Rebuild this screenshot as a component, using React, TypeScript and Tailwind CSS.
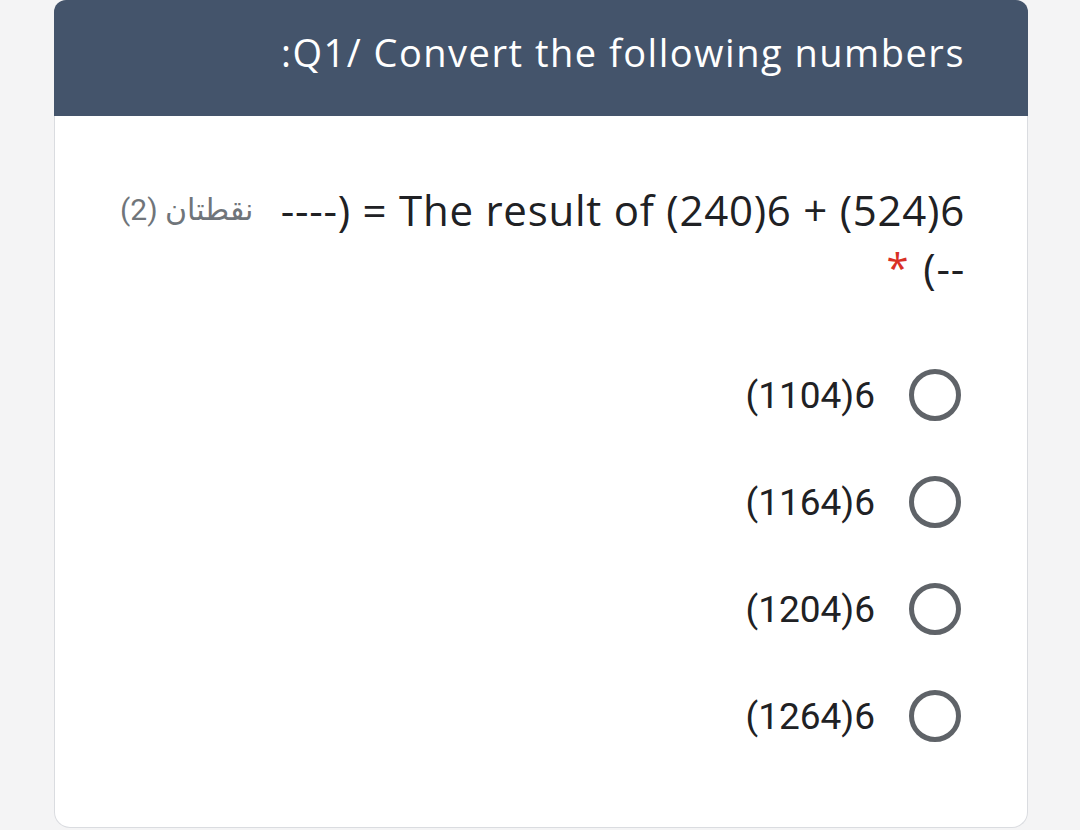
import React from "react";

const options = ["(1104)6", "(1164)6", "(1204)6", "(1264)6"];

export default function App() {
  return (
    <div className="w-[1080px] h-[830px] bg-[#f4f4f5] overflow-hidden pl-[54px]">
      <div className="w-[974px] flex flex-col">
        <div className="h-[116px] bg-[#44546b] rounded-t-[12px] flex items-start justify-end pr-[63px] pt-[28px]">
          <span className="text-white text-[38px] leading-[48px] tracking-[1.5px]" style={{ fontFamily: "'Open Sans', sans-serif" }}>
            :Q1/ Convert the following numbers
          </span>
        </div>
        <div className="h-[712px] bg-white border-x border-b border-[#dadce0] rounded-b-[16px] flex flex-col pr-[62px] pl-[65px] pt-[65px]">
          <div className="flex justify-between items-start">
            <div
              dir="rtl"
              className="text-[#70757a] text-[30px] leading-[58px]"
              style={{ fontFamily: "Roboto, 'DejaVu Sans', sans-serif" }}
            >
              نقطتان (2)
            </div>
            <div className="flex flex-col items-end text-[#202124] text-[42px] leading-[58px] tracking-[0.75px]" style={{ fontFamily: "'Open Sans', sans-serif" }}>
              <span>----) = The result of (240)6 + (524)6</span>
              <span className="flex items-center gap-[14px]">
                <span className="text-[#d93025] text-[40px]">*</span>
                <span>(--</span>
              </span>
            </div>
          </div>
          <div className="flex flex-col items-end mt-[72px] gap-[55px]">
            {options.map((o) => (
              <div key={o} className="flex items-center gap-[34px] h-[52px]">
                <span className="text-[#202124] text-[37px] leading-none" style={{ fontFamily: "Roboto, sans-serif" }}>
                  {o}
                </span>
                <span className="w-[52px] h-[52px] rounded-full border-[5px] border-[#5f6368] mr-[4px]" />
              </div>
            ))}
          </div>
        </div>
      </div>
    </div>
  );
}
